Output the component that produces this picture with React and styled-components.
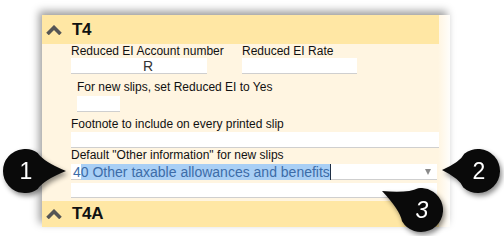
import React from "react";
import styled, { createGlobalStyle } from "styled-components";

const GlobalStyle = createGlobalStyle`
  html, body {
    margin: 0;
    padding: 0;
    background: #ffffff;
  }
  body {
    font-family: "Liberation Sans", Arial, sans-serif;
  }
`;

const Stage = styled.div`
  position: relative;
  width: 504px;
  height: 236px;
  overflow: hidden;
  background: #ffffff;
  padding: 15px 0 0 42px;
  box-sizing: border-box;
`;

const Panel = styled.div`
  width: 408px;
  display: flex;
  flex-direction: column;
  background: linear-gradient(to right, #fff5e1 396px, #ffffff 410px);
  box-shadow: -3px -4px 8px rgba(0, 0, 0, 0.38);
`;

const Header = styled.div`
  width: 397px;
  height: ${(props) => props.h}px;
  background: #ffe7a4;
  display: flex;
  align-items: center;
  padding-left: 4px;
  box-sizing: border-box;
`;

const Chevron = styled.svg`
  width: 16px;
  height: 10px;
  margin-right: 10px;
  flex: none;
`;

const HeaderTitle = styled.span`
  font-size: 17px;
  font-weight: 700;
  color: #111;
  letter-spacing: -0.3px;
`;

const Body = styled.div`
  display: flex;
  flex-direction: column;
  padding: 0 13px 3px 29px;
`;

const Row = styled.div`
  display: grid;
  grid-template-columns: 171px 115px;
`;

const Field = styled.div`
  display: flex;
  flex-direction: column;
  margin-top: ${(props) => props.mt || 0}px;
  padding-left: ${(props) => props.indent || 0}px;
`;

const Label = styled.div`
  font-size: 12px;
  line-height: 14px;
  color: #111;
  white-space: nowrap;
`;

const Input = styled.div`
  width: ${(props) => props.w || "100%"};
  height: ${(props) => props.h || 16}px;
  margin-top: ${(props) => props.gap || 0}px;
  background: #ffffff;
  border-bottom: 1px solid #cfcfcf;
  box-sizing: border-box;
  font-size: 14px;
  line-height: 16px;
  color: #333;
  text-align: center;
  padding-left: 18px;
`;

const Select = styled.div`
  height: 16px;
  margin-top: 2px;
  background: #ffffff;
  border-bottom: 1px solid #cfcfcf;
  box-sizing: border-box;
  display: flex;
  align-items: center;
  justify-content: space-between;
  padding: 0 6px 0 2px;
`;

const SelectText = styled.span`
  font-size: 14px;
  line-height: 16px;
  color: #3c6ca8;
  white-space: nowrap;
`;

const Highlight = styled.span`
  background: #a9cff5;
  border-right: 1.5px solid #1f2f45;
`;

const Arrow = styled.span`
  width: 0;
  height: 0;
  border-left: 3.5px solid transparent;
  border-right: 3.5px solid transparent;
  border-top: 6px solid #8a8a8a;
`;

const CalloutSvg = styled.svg`
  position: absolute;
  left: 0;
  top: 0;
  overflow: visible;
  filter: drop-shadow(2px 3px 2.5px rgba(0, 0, 0, 0.45));
  pointer-events: none;
`;

const CalloutNumber = styled.text`
  font-family: "Liberation Sans", Arial, sans-serif;
  font-size: 23px;
  fill: #ffffff;
`;

const ChevronIcon = () => (
  <Chevron viewBox="0 0 16 10">
    <path d="M1.5 9 L8 2.5 L14.5 9" fill="none" stroke="#555" strokeWidth="3.6" />
  </Chevron>
);

const Callout = ({ cx, cy, tx, ty, r, n, italic }) => {
  const dx = tx - cx;
  const dy = ty - cy;
  const d = Math.sqrt(dx * dx + dy * dy);
  const th = Math.atan2(dy, dx);
  const a = Math.acos(r / d) * 0.95;
  const p1 = [cx + r * Math.cos(th + a), cy + r * Math.sin(th + a)];
  const p2 = [cx + r * Math.cos(th - a), cy + r * Math.sin(th - a)];
  const mx = cx + (d * 0.6) * Math.cos(th);
  const my = cy + (d * 0.6) * Math.sin(th);
  const path = `M${tx} ${ty} Q${(mx + p1[0]) / 2} ${(my + p1[1]) / 2} ${p1[0]} ${p1[1]} A${r} ${r} 0 1 1 ${p2[0]} ${p2[1]} Q${(mx + p2[0]) / 2} ${(my + p2[1]) / 2} ${tx} ${ty} Z`;
  return (
    <CalloutSvg width="504" height="236">
      <path d={path} fill="#0a0a0a" />
      <CalloutNumber
        x={cx + 1}
        y={cy + 8}
        textAnchor="middle"
        fontStyle={italic ? "italic" : "normal"}
      >
        {n}
      </CalloutNumber>
    </CalloutSvg>
  );
};

export default function App() {
  return (
    <>
      <GlobalStyle />
      <Stage>
        <Panel>
          <Header h={29}>
            <ChevronIcon />
            <HeaderTitle>T4</HeaderTitle>
          </Header>
          <Body>
            <Row>
              <Field>
                <Label>Reduced EI Account number</Label>
                <Input w="136px">R</Input>
              </Field>
              <Field>
                <Label>Reduced EI Rate</Label>
                <Input />
              </Field>
            </Row>
            <Field mt={6} indent={6}>
              <Label>For new slips, set Reduced EI to Yes</Label>
              <Input w="43px" gap={2} />
            </Field>
            <Field mt={5}>
              <Label>Footnote to include on every printed slip</Label>
              <Input gap={1} w="368px" />
            </Field>
            <Field>
              <Label>Default "Other information" for new slips</Label>
              <Select>
                <SelectText>
                  4<Highlight>0 Other taxable allowances and benefits</Highlight>
                </SelectText>
                <Arrow />
              </Select>
              <Input h={15} gap={3} />
            </Field>
          </Body>
          <Header h={26}>
            <ChevronIcon />
            <HeaderTitle>T4A</HeaderTitle>
          </Header>
        </Panel>
        <Callout cx={25} cy={171} tx={66} ty={171} r={22} n="1" />
        <Callout cx={478} cy={171} tx={442} ty={170} r={22} n="2" />
        <Callout cx={421} cy={210} tx={382} ty={191} r={22} n="3" italic />
      </Stage>
    </>
  );
}
